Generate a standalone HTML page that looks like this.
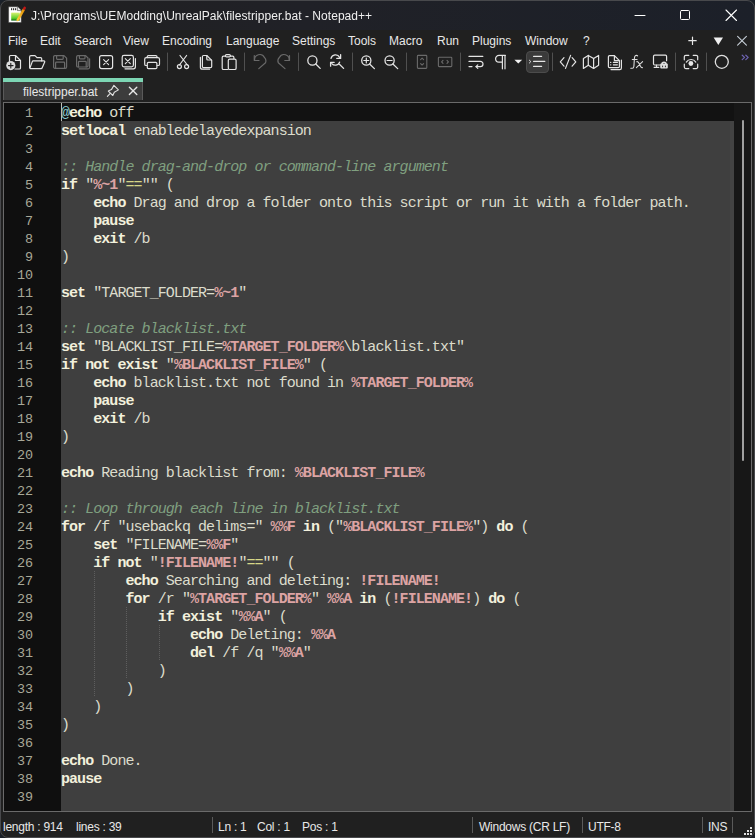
<!DOCTYPE html>
<html><head><meta charset="utf-8">
<style>
*{margin:0;padding:0;box-sizing:border-box}
html,body{width:755px;height:838px;overflow:hidden;background:#1a2029}
#winbg{position:absolute;left:0;top:0;width:755px;height:838px;background:#202020;border-radius:8px}
body{position:relative;font-family:"Liberation Sans",sans-serif;color:#e6e6e6}
.abs{position:absolute}
#win{position:absolute;left:0;top:0;width:755px;height:838px;border:1px solid #48494c;border-radius:8px;pointer-events:none}
#title{position:absolute;left:0;top:0;width:755px;height:30px;background:linear-gradient(90deg,#202020 0%,#202127 40%,#1c2029 100%);border-radius:8px 8px 0 0}
#ttext{position:absolute;will-change:transform;left:31px;top:9px;font-size:12px;letter-spacing:0.05px;color:#f0f0f0;white-space:nowrap}
.menu{position:absolute;top:34px;font-size:12px;color:#e8e8e8;white-space:nowrap}
.tb{position:absolute;top:54px}
.sep{position:absolute;top:53px;width:1px;height:18px;background:#5a5a5a}
#tabbar{position:absolute;left:0;top:74px;width:755px;height:28px;background:#202020}
#tab{position:absolute;left:3px;top:78px;width:140px;height:22px;background:#3c3c3c;border-left:1px solid #5a5a5a;border-right:1px solid #5a5a5a}
#tabtop{position:absolute;left:3px;top:78px;width:140px;height:4px;background:#7dd6b4}
#tabtext{position:absolute;left:23px;top:85px;font-size:12px;color:#e8e8e8}
#editor{position:absolute;left:3px;top:102px;width:749px;height:710px;border:1px solid #6a6a6a;background:#3f3f3f;overflow:hidden}
#margin{position:absolute;left:4px;top:103px;width:57px;height:708px;background:#0f0f0f}
#curline{position:absolute;left:61px;top:103px;width:673px;height:18px;background:#121212}
#vscroll{position:absolute;left:734px;top:103px;width:17px;height:708px;background:#171717}
#thumb{position:absolute;left:742px;top:120px;width:2px;height:341px;background:#a0a0a0;border-radius:1px}
.ln{position:absolute;left:61px;height:18px;line-height:18px;font-family:"Liberation Mono",monospace;font-size:15px;letter-spacing:-0.94px;color:#dcdccc;white-space:pre}
.nm{position:absolute;left:4px;width:29px;text-align:right;height:18px;line-height:18px;font-family:"Liberation Mono",monospace;font-size:13.43px;color:#a8a898;white-space:pre}
.k{color:#f2f0dc;font-weight:bold}
.v{color:#dca3a3;font-weight:bold}
.o{color:#d6d687}
.a{color:#8cd0d3}
.c{color:#7f9f7f;font-style:italic}
.g{position:absolute;width:1px;background:repeating-linear-gradient(180deg,#5e5e5e 0 1px,transparent 1px 2px)}
#caret{position:absolute;left:61px;top:103px;width:1px;height:18px;background:#b8c0b8}
#status{position:absolute;left:0;top:812px;width:755px;height:26px;background:#202020;border-radius:0 0 8px 8px}
.st{position:absolute;top:820px;font-size:12px;letter-spacing:-0.25px;color:#e8e8e8;white-space:nowrap}
.ssep{position:absolute;top:817px;width:1px;height:16px;background:#5a5a5a}
svg{position:absolute;overflow:visible}
</style></head><body>
<div id="winbg"></div>
<div id="title">
</div>
<div id="ttext">J:\Programs\UEModding\UnrealPak\filestripper.bat - Notepad++</div>

<span class="menu" style="left:8px">File</span>
<span class="menu" style="left:40px">Edit</span>
<span class="menu" style="left:74px">Search</span>
<span class="menu" style="left:123px">View</span>
<span class="menu" style="left:162px">Encoding</span>
<span class="menu" style="left:226px">Language</span>
<span class="menu" style="left:292px">Settings</span>
<span class="menu" style="left:348px">Tools</span>
<span class="menu" style="left:389px">Macro</span>
<span class="menu" style="left:437px">Run</span>
<span class="menu" style="left:472px">Plugins</span>
<span class="menu" style="left:525px">Window</span>
<span class="menu" style="left:583px">?</span>

<svg style="left:0;top:0" width="755" height="102" viewBox="0 0 755 102" fill="none" stroke-linecap="round" stroke-linejoin="round">
<g stroke="#e4e4e4" stroke-width="1.2">
<!-- new file -->
<path d="M9.5 62V56.5a1 1 0 0 1 1-1H15.5L20.5 60.5V68a1 1 0 0 1 -1 1H15"/>
<path d="M15.5 55.5V60.5H20.5"/>
<circle cx="10.8" cy="65.6" r="4.6" fill="#dcdcdc" stroke="none"/>
<path d="M10.8 63.3V67.9M8.5 65.6H13.1" stroke="#202020" stroke-width="1.1"/>
<!-- open folder -->
<path d="M29.6 67.5V57a1.4 1.4 0 0 1 1.4-1.4H35L37 57.6H40.5a1.2 1.2 0 0 1 1.2 1.2V61"/>
<path d="M29.8 68.2L32.3 61.6a1 1 0 0 1 1-0.7H44a0.8 0.8 0 0 1 0.7 1.1L42.2 67.8a1.2 1.2 0 0 1 -1.1 0.8H30.6a0.9 0.9 0 0 1 -0.8-0.4Z"/>
</g>
<g stroke="#6a6a6a" stroke-width="1.2">
<!-- save -->
<path d="M54.6 55.6H64L66.6 58.2V67a1.3 1.3 0 0 1 -1.3 1.3H54.9a1.3 1.3 0 0 1 -1.3-1.3V56.9a1.3 1.3 0 0 1 1.3-1.3Z"/>
<path d="M56.6 55.8V58.6a0.8 0.8 0 0 0 0.8 0.8H62.4a0.8 0.8 0 0 0 0.8-0.8V55.8"/>
<path d="M55.6 68.2V63a0.8 0.8 0 0 1 0.8-0.8H63.8a0.8 0.8 0 0 1 0.8 0.8V68.2"/>
<!-- save all -->
<path d="M77.6 55.6H85.6L88 58V65.7a1.3 1.3 0 0 1 -1.3 1.3H77.9a1.3 1.3 0 0 1 -1.3-1.3V56.9a1.3 1.3 0 0 1 1.3-1.3Z"/>
<path d="M79.4 55.8V58a0.8 0.8 0 0 0 0.8 0.8H84.2a0.8 0.8 0 0 0 0.8-0.8V55.8"/>
<path d="M78.5 66.9V62.2a0.8 0.8 0 0 1 0.8-0.8H85.4a0.8 0.8 0 0 1 0.8 0.8V66.9"/>
<path d="M89.6 58.8V67.2a1.6 1.6 0 0 1 -1.6 1.6H79.2"/>
</g>
<g stroke="#e4e4e4" stroke-width="1.2">
<!-- close -->
<rect x="99.6" y="55.6" width="13" height="13" rx="2"/>
<path d="M103.6 59.6L108.6 64.6M108.6 59.6L103.6 64.6" stroke-width="1.1"/>
<!-- close all -->
<rect x="122.2" y="55.4" width="11.2" height="11.4" rx="1.8"/>
<path d="M125.3 58.6L130.3 63.6M130.3 58.6L125.3 63.6" stroke-width="1.1"/>
<path d="M135.4 58.6V66.8a2 2 0 0 1 -2 2H125"/>
<!-- print -->
<path d="M147.2 57.6V56.8a1.2 1.2 0 0 1 1.2-1.2H155.8a1.2 1.2 0 0 1 1.2 1.2V57.6"/>
<path d="M146.8 65.5H146a1.3 1.3 0 0 1 -1.3-1.3V59.2a1.6 1.6 0 0 1 1.6-1.6H157.9a1.6 1.6 0 0 1 1.6 1.6V64.2a1.3 1.3 0 0 1 -1.3 1.3H157.2"/>
<rect x="147.3" y="62.4" width="9.6" height="6.2" rx="1.2"/>
<!-- cut -->
<path d="M180 55.5L187.4 65M186.6 55.5L179.4 65"/>
<circle cx="179.4" cy="66.6" r="2"/>
<circle cx="186.6" cy="66.6" r="2"/>
<!-- copy -->
<path d="M203.6 55.5H206.8L211.7 60.4V66.5a1.2 1.2 0 0 1 -1.2 1.2H203.6a1.2 1.2 0 0 1 -1.2-1.2V56.7a1.2 1.2 0 0 1 1.2-1.2Z"/>
<path d="M206.8 55.7V59a1 1 0 0 0 1 1H211.5"/>
<path d="M200.4 57.4V67.2a2 2 0 0 0 2 2H209.6"/>
<!-- paste -->
<path d="M225.4 56.2H223.5a1.3 1.3 0 0 0 -1.3 1.3V68.2a1.3 1.3 0 0 0 1.3 1.3H227.6"/>
<path d="M230.4 56.2H232.6a1.3 1.3 0 0 1 1.3 1.3V58.6"/>
<rect x="225.4" y="54.6" width="5" height="2.2" rx="1.1"/>
<rect x="228.3" y="59.2" width="7.8" height="10.3" rx="1.3"/>
</g>
<g stroke="#6a6a6a" stroke-width="1.2">
<!-- undo -->
<path d="M254.3 55.6V60.5H259"/>
<path d="M254.6 60.3A5.2 5.2 0 0 1 264.4 57.4A5 5 0 0 1 265.5 62.8L258.8 68.6"/>
<!-- redo -->
<path d="M289.5 55.6V60.5H284.8"/>
<path d="M289.2 60.3A5.2 5.2 0 0 0 279.4 57.4A5 5 0 0 0 278.3 62.8L285 68.6"/>
</g>
<g stroke="#e4e4e4" stroke-width="1.3">
<!-- find -->
<circle cx="312.4" cy="60.5" r="4.6"/>
<path d="M315.8 64L320.2 68.4"/>
<!-- replace -->
<path d="M331 58.4A4.6 4.6 0 0 1 339.6 57.4"/>
<path d="M340.6 54.6V58.4H336.8"/>
<path d="M339.6 62.2A4.6 4.6 0 0 1 331.8 63.6"/>
<path d="M330.6 66.2V62.3H334.2"/>
<path d="M339.4 64.2L343.6 68.4"/>
<!-- zoom in -->
<circle cx="366.3" cy="60.5" r="4.6"/>
<path d="M369.6 64L374.4 68.6"/>
<path d="M366.3 58V63M363.8 60.5H368.8" stroke-width="1.2"/>
<!-- zoom out -->
<circle cx="389.6" cy="60.5" r="4.6"/>
<path d="M392.9 64L397.7 68.6"/>
<path d="M387.1 60.5H392.1" stroke-width="1.2"/>
</g>
<g stroke="#6a6a6a" stroke-width="1.1">
<rect x="417.4" y="55.4" width="9.4" height="13" rx="0.8"/>
<path d="M420.6 59.6L422.1 58.2L423.6 59.6M420.6 63.6L422.1 65L423.6 63.6"/>
<rect x="438.4" y="57.2" width="13.4" height="9.4" rx="0.8"/>
<path d="M443 60.4L441.6 61.9L443 63.4M447 60.4L448.4 61.9L447 63.4"/>
</g>
<g stroke="#e4e4e4" stroke-width="1.2">
<!-- word wrap -->
<path d="M469 56.4H482.8"/>
<path d="M469 61.4H480.4a2.6 2.6 0 0 1 0 5.2H476"/>
<path d="M477.8 64.8L476 66.6L477.8 68.4"/>
<path d="M469 66.6H472"/>
<!-- pilcrow -->
<path d="M502.4 55.4V68.8M505 55.4V68.8M505.4 55.4H499a3.4 3.4 0 0 0 0 6.8H502.4"/>
</g>
<path d="M514.4 59.8H522.2L518.3 63.6Z" fill="#f0f0f0"/>
<rect x="526.5" y="51.5" width="22" height="21" rx="3.5" fill="#3a3a3a" stroke="#4c4c4c" stroke-width="1"/>
<g stroke="#e4e4e4" stroke-width="1.2">
<path d="M533.6 56.4H541.6M533.6 61.4H544.8M533.6 66.4H541.6"/>
<path d="M529.4 60.2L530.8 61.6L529.4 63" stroke-width="1"/>
<!-- xml -->
<path d="M564 57.6L560.3 61.9L564 66.2M572.1 57.6L575.8 61.9L572.1 66.2M570.6 55.4L565.5 68.4"/>
<!-- map -->
<path d="M583.4 58.6L588.3 55.4L593.6 58.6L598.6 55.4V65.2L593.6 68.4L588.3 65.2L583.4 68.4Z"/>
<path d="M588.3 55.4V65.2M593.6 58.6V68.4"/>
<!-- doc list -->
<path d="M609.6 55.6H614.4L619.4 60.6V66.4a1.2 1.2 0 0 1 -1.2 1.2H609.6a1.2 1.2 0 0 1 -1.2-1.2V56.8a1.2 1.2 0 0 1 1.2-1.2Z"/>
<path d="M614.4 55.8V60.6H619.2"/>
<path d="M613.4 62.4H617.4M613.4 64.8H617.4M610.6 62.4H610.8M610.6 64.8H610.8"/>
<path d="M621.4 60.2V68a1.6 1.6 0 0 1 -1.6 1.6H611"/>
<!-- monitor lock -->
<path d="M660.2 65H654.7a1.2 1.2 0 0 1 -1.2-1.2V56.4a1.2 1.2 0 0 1 1.2-1.2H665.4a1.2 1.2 0 0 1 1.2 1.2V60.7"/>
<path d="M656.5 65.2V67.4M654.2 67.4H658.8"/>
</g>
<rect x="660.2" y="63.6" width="7.6" height="5" rx="1" fill="#e0e0e0"/>
<path d="M662 64.2a2 2 0 0 1 4 0" stroke="#e0e0e0" stroke-width="1.6" fill="none"/>
<rect x="662.1" y="65.6" width="1" height="1.6" fill="#303030"/><rect x="664.9" y="65.6" width="1" height="1.6" fill="#303030"/>
<g stroke="#e4e4e4" stroke-width="1.2">
<!-- eye scan -->
<path d="M684.3 59.8V56.8a1.5 1.5 0 0 1 1.5-1.5H688.8M693.2 55.3H696.2a1.5 1.5 0 0 1 1.5 1.5V59.8M697.7 64.2V67.1a1.5 1.5 0 0 1 -1.5 1.5H693.2M688.8 68.6H685.8a1.5 1.5 0 0 1 -1.5-1.5V64.2"/>
<path d="M686.3 62.1A5.64 5.64 0 0 1 695.8 62.1"/>
</g>
<circle cx="690.9" cy="63.5" r="2.4" fill="#e6e6e6"/>
<circle cx="721.8" cy="61.8" r="6.5" stroke="#e0e0e0" stroke-width="1.3"/>
<!-- fx -->
<path d="M637.6 55.9C637.2 55.4 636.4 55.3 635.7 55.5C634.8 55.8 634.5 56.8 634.4 58.2L633.9 66.2C633.8 67.6 633.2 68.3 632.3 68.3H630.8M632.3 59.5H637.1M636.8 61.8C637.6 61.4 638.2 61.9 638.8 63.1L640.6 66.6C641.1 67.5 641.6 67.8 642.4 67.6M642.6 61.7L636.4 67.7" stroke="#dcdcdc" stroke-width="1.1"/>
<path d="M742.2 55.2L744.6 57.4L742.2 59.6M745.8 55.2L748.2 57.4L745.8 59.6" stroke="#6e64b4" stroke-width="1.2"/>
<!-- separators -->
<g stroke="#505050" stroke-width="1">
<path d="M167.5 53V70.5M244.5 53V70.5M298.5 53V70.5M352.5 53V70.5M406.5 53V70.5M460.5 53V70.5M552.5 53V70.5M675.5 53V70.5M706.5 53V70.5"/>
</g>
<!-- right menu items -->
<path d="M692.5 37V44.5M688.8 40.7H696.2" stroke="#e6e6e6" stroke-width="1.2"/>
<path d="M713.6 37.4H723L718.3 45Z" fill="#f0f0f0"/>
<path d="M737.6 36.4L746.4 45.2M746.4 36.4L737.6 45.2" stroke="#c8d0d8" stroke-width="1.1"/>
<!-- window controls -->
<path d="M635 15.5H645" stroke="#ffffff" stroke-width="1"/>
<rect x="680.5" y="10.5" width="9" height="9" rx="1" stroke="#ffffff" stroke-width="1"/>
<path d="M726 10L736.5 20.5M736.5 10L726 20.5" stroke="#ffffff" stroke-width="1.1"/>
</svg>

<div id="tab"></div>
<div id="tabtop"></div>
<div id="tabtext">filestripper.bat</div>

<svg style="left:0;top:0" width="160" height="102" viewBox="0 0 160 102">
<defs><linearGradient id="gr" x1="0" y1="0" x2="0" y2="1"><stop offset="0" stop-color="#d8f070"/><stop offset="0.7" stop-color="#5ccf2a"/><stop offset="1" stop-color="#0a6a10"/></linearGradient>
<linearGradient id="pe" x1="0" y1="0" x2="1" y2="0"><stop offset="0" stop-color="#ffd040"/><stop offset="1" stop-color="#e08a00"/></linearGradient></defs>
<path d="M8.6 6.8H17.6L21.2 10.4V22.6H8.6Z" fill="#ffffff" stroke="#3a3a3a" stroke-width="0.5"/>
<path d="M17.4 6.8V10.6H21.2" fill="#e8e8e8" stroke="#555" stroke-width="0.7"/>
<rect x="11" y="8.2" width="1.2" height="2" fill="#333"/><rect x="13" y="8.2" width="1.2" height="2" fill="#333"/><rect x="15" y="8.2" width="1.2" height="2" fill="#333"/>
<rect x="11.2" y="12.6" width="8.6" height="8" fill="url(#gr)"/>
<path d="M16.6 19.6L22.8 8.8L25 10L18.8 20.8L16.6 21.6Z" fill="url(#pe)"/>
<path d="M22.6 9L23.6 7.2A1.2 1.2 0 0 1 25.8 8.4L24.8 10.2Z" fill="#c01818"/>
<path d="M113.9 85.4L118.4 89.9L114.3 92.3L112.8 95.5L108.3 91.1L111.4 89.6Z" fill="none" stroke="#e0e0e0" stroke-width="1.1" stroke-linejoin="round"/>
<path d="M110.3 93.3L107.4 96.4" stroke="#e0e0e0" stroke-width="1.1" stroke-linecap="round"/>
<path d="M129.4 87.2L136.8 94.6M136.8 87.2L129.4 94.6" stroke="#e6e6e6" stroke-width="1.4" stroke-linecap="round"/>
</svg>
<div id="editor"></div>
<div id="margin"></div>
<div id="curline"></div>
<div class="abs" style="left:730px;top:121px;width:4px;height:690px;background:#434343"></div>
<div id="vscroll"></div>
<div id="thumb"></div>
<div class="g" style="left:94px;top:571px;height:126px"></div>
<div class="g" style="left:126px;top:607px;height:72px"></div>
<div class="g" style="left:159px;top:625px;height:36px"></div>
<div class="nm" style="top:105px">1</div>
<div class="nm" style="top:123px">2</div>
<div class="nm" style="top:141px">3</div>
<div class="nm" style="top:159px">4</div>
<div class="nm" style="top:177px">5</div>
<div class="nm" style="top:195px">6</div>
<div class="nm" style="top:213px">7</div>
<div class="nm" style="top:231px">8</div>
<div class="nm" style="top:249px">9</div>
<div class="nm" style="top:267px">10</div>
<div class="nm" style="top:285px">11</div>
<div class="nm" style="top:303px">12</div>
<div class="nm" style="top:321px">13</div>
<div class="nm" style="top:339px">14</div>
<div class="nm" style="top:357px">15</div>
<div class="nm" style="top:375px">16</div>
<div class="nm" style="top:393px">17</div>
<div class="nm" style="top:411px">18</div>
<div class="nm" style="top:429px">19</div>
<div class="nm" style="top:447px">20</div>
<div class="nm" style="top:465px">21</div>
<div class="nm" style="top:483px">22</div>
<div class="nm" style="top:501px">23</div>
<div class="nm" style="top:519px">24</div>
<div class="nm" style="top:537px">25</div>
<div class="nm" style="top:555px">26</div>
<div class="nm" style="top:573px">27</div>
<div class="nm" style="top:591px">28</div>
<div class="nm" style="top:609px">29</div>
<div class="nm" style="top:627px">30</div>
<div class="nm" style="top:645px">31</div>
<div class="nm" style="top:663px">32</div>
<div class="nm" style="top:681px">33</div>
<div class="nm" style="top:699px">34</div>
<div class="nm" style="top:717px">35</div>
<div class="nm" style="top:735px">36</div>
<div class="nm" style="top:753px">37</div>
<div class="nm" style="top:771px">38</div>
<div class="nm" style="top:789px">39</div>
<div class="ln" style="top:105px"><span class="a">@</span><b class="k">echo</b> off</div>
<div class="ln" style="top:123px"><b class="k">setlocal</b> enabledelayedexpansion</div>
<div class="ln" style="top:141px"></div>
<div class="ln" style="top:159px"><i class="c">:: Handle drag-and-drop or command-line argument</i></div>
<div class="ln" style="top:177px"><b class="k">if</b> &quot;<b class="v">%~1</b>&quot;<span class="o">==</span>&quot;&quot; (</div>
<div class="ln" style="top:195px">    <b class="k">echo</b> Drag and drop a folder onto this script or run it with a folder path.</div>
<div class="ln" style="top:213px">    <b class="k">pause</b></div>
<div class="ln" style="top:231px">    <b class="k">exit</b> /b</div>
<div class="ln" style="top:249px">)</div>
<div class="ln" style="top:267px"></div>
<div class="ln" style="top:285px"><b class="k">set</b> &quot;TARGET_FOLDER=<b class="v">%~1</b>&quot;</div>
<div class="ln" style="top:303px"></div>
<div class="ln" style="top:321px"><i class="c">:: Locate blacklist.txt</i></div>
<div class="ln" style="top:339px"><b class="k">set</b> &quot;BLACKLIST_FILE=<b class="v">%TARGET_FOLDER%</b>\blacklist.txt&quot;</div>
<div class="ln" style="top:357px"><b class="k">if</b> <b class="k">not</b> <b class="k">exist</b> &quot;<b class="v">%BLACKLIST_FILE%</b>&quot; (</div>
<div class="ln" style="top:375px">    <b class="k">echo</b> blacklist.txt not found in <b class="v">%TARGET_FOLDER%</b></div>
<div class="ln" style="top:393px">    <b class="k">pause</b></div>
<div class="ln" style="top:411px">    <b class="k">exit</b> /b</div>
<div class="ln" style="top:429px">)</div>
<div class="ln" style="top:447px"></div>
<div class="ln" style="top:465px"><b class="k">echo</b> Reading blacklist from: <b class="v">%BLACKLIST_FILE%</b></div>
<div class="ln" style="top:483px"></div>
<div class="ln" style="top:501px"><i class="c">:: Loop through each line in blacklist.txt</i></div>
<div class="ln" style="top:519px"><b class="k">for</b> /f &quot;usebackq delims=&quot; <b class="v">%%F</b> <b class="k">in</b> (&quot;<b class="v">%BLACKLIST_FILE%</b>&quot;) <b class="k">do</b> (</div>
<div class="ln" style="top:537px">    <b class="k">set</b> &quot;FILENAME=<b class="v">%%F</b>&quot;</div>
<div class="ln" style="top:555px">    <b class="k">if</b> <b class="k">not</b> &quot;<b class="v">!FILENAME!</b>&quot;<span class="o">==</span>&quot;&quot; (</div>
<div class="ln" style="top:573px">        <b class="k">echo</b> Searching and deleting: <b class="v">!FILENAME!</b></div>
<div class="ln" style="top:591px">        <b class="k">for</b> /r &quot;<b class="v">%TARGET_FOLDER%</b>&quot; <b class="v">%%A</b> <b class="k">in</b> (<b class="v">!FILENAME!</b>) <b class="k">do</b> (</div>
<div class="ln" style="top:609px">            <b class="k">if</b> <b class="k">exist</b> &quot;<b class="v">%%A</b>&quot; (</div>
<div class="ln" style="top:627px">                <b class="k">echo</b> Deleting: <b class="v">%%A</b></div>
<div class="ln" style="top:645px">                <b class="k">del</b> /f /q &quot;<b class="v">%%A</b>&quot;</div>
<div class="ln" style="top:663px">            )</div>
<div class="ln" style="top:681px">        )</div>
<div class="ln" style="top:699px">    )</div>
<div class="ln" style="top:717px">)</div>
<div class="ln" style="top:735px"></div>
<div class="ln" style="top:753px"><b class="k">echo</b> Done.</div>
<div class="ln" style="top:771px"><b class="k">pause</b></div>
<div class="ln" style="top:789px"></div>
<div id="caret"></div>

<div id="status"></div>
<span class="st" style="left:3px">length : 914</span>
<span class="st" style="left:76px">lines : 39</span>
<div class="ssep" style="left:212px"></div>
<span class="st" style="left:218px">Ln : 1</span>
<span class="st" style="left:257px">Col : 1</span>
<span class="st" style="left:302px">Pos : 1</span>
<div class="ssep" style="left:472px"></div>
<span class="st" style="left:479px">Windows (CR LF)</span>
<div class="ssep" style="left:582px"></div>
<span class="st" style="left:588px">UTF-8</span>
<div class="ssep" style="left:702px"></div>
<span class="st" style="left:708px">INS</span>
<div class="ssep" style="left:732px"></div>
<svg style="left:0;top:0" width="755" height="838">
<g fill="#e0e0e0"><rect x="750" y="827" width="2" height="2"/><rect x="747" y="830" width="2" height="2"/><rect x="750" y="830" width="2" height="2"/><rect x="744" y="833" width="2" height="2"/><rect x="747" y="833" width="2" height="2"/><rect x="750" y="833" width="2" height="2"/></g>
</svg>
<div id="win"></div>
</body></html>
